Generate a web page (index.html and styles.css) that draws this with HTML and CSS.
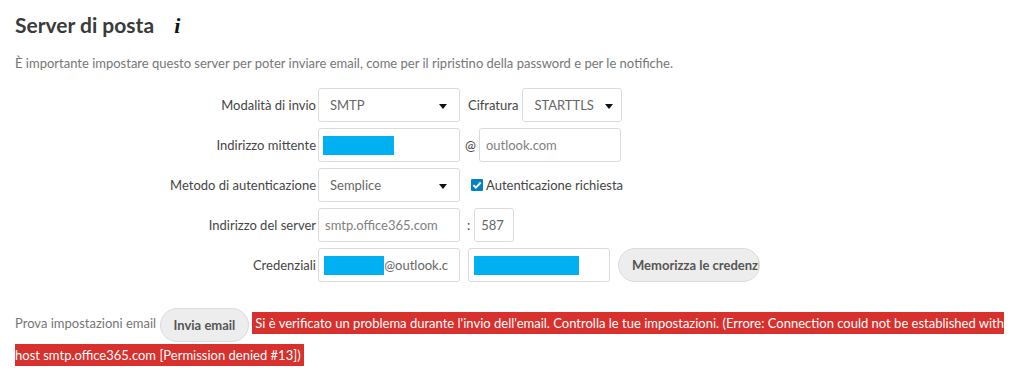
FILE: index.html
```html
<!DOCTYPE html>
<html>
<head>
  <meta charset="UTF-8">
  <title>Server di posta</title>
  <link rel="stylesheet" href="styles.css">
</head>
<body>

  <div class="section">
    <h2 class="title">Server di posta <span class="info">i</span></h2>
    <p class="desc">È importante impostare questo server per poter inviare email, come per il ripristino della password e per le notifiche.</p>

    <div class="form">
      <div class="row">
        <label class="lbl">Modalità di invio</label>
        <div class="select wide"><span>SMTP</span></div>
        <span class="txt">Cifratura</span>
        <div class="select small"><span>STARTTLS</span></div>
      </div>

      <div class="row">
        <label class="lbl">Indirizzo mittente</label>
        <div class="input wide"><span class="mask m1"></span></div>
        <span class="txt sep">@</span>
        <div class="input wide ph">outlook.com</div>
      </div>

      <div class="row">
        <label class="lbl">Metodo di autenticazione</label>
        <div class="select wide"><span>Semplice</span></div>
        <label class="check">
          <svg width="12" height="12" viewBox="0 0 12 12"><rect width="12" height="12" rx="1" fill="#0082c9"/><path d="M2.4 6.1 L4.9 8.6 L9.7 3.5" stroke="#fff" stroke-width="1.9" fill="none"/></svg>
          Autenticazione richiesta
        </label>
      </div>

      <div class="row">
        <label class="lbl">Indirizzo del server</label>
        <div class="input wide ph">smtp.office365.com</div>
        <span class="txt colon">:</span>
        <div class="input port">587</div>
      </div>

      <div class="row">
        <label class="lbl">Credenziali</label>
        <div class="input wide"><span class="mask m2"></span>@outlook.c</div>
        <div class="input wide pass"><span class="mask m3"></span></div>
        <button class="btn store">Memorizza le credenziali</button>
      </div>
    </div>

    <p class="test"><span class="test-lbl">Prova impostazioni email</span> <button class="btn">Invia email</button><span class="error">Si è verificato un problema durante l'invio dell'email. Controlla le tue impostazioni. (Errore: Connection could not be established with host smtp.office365.com [Permission denied #13])</span></p>
  </div>

</body>
</html>
```

FILE: styles.css
```css
body { margin:0; background:#fff; font-family:Lato, "Open Sans", sans-serif; font-size:13px; color:#454545; }
.section { padding:10px 7px 0 15px; }
.title { margin:0; font-size:21px; line-height:30px; font-weight:700; color:#3a3a3a; }
.info { font-family:"Liberation Serif", serif; font-style:italic; font-weight:700; font-size:22px; color:#111; margin-left:15px; }
.desc { margin:12px 0 12px; line-height:20px; color:#767676; }

.form { display:flex; flex-direction:column; }
.row { display:flex; align-items:center; height:40px; }
.lbl { width:301px; text-align:right; padding-right:2px; white-space:nowrap; }
.txt { margin:0 4px 0 8px; }
.sep { margin:0 3px 0 5px; }
.colon { margin:0 4px 0 7px; }

.input, .select { box-sizing:border-box; height:34px; border:1px solid #dbdbdb; border-radius:3px; padding:0 11px; display:flex; align-items:center; color:#666; background:#fff; white-space:nowrap; overflow:hidden; }
.wide { width:142px; }
.small { width:100px; }
.port { width:40px; padding:0 6px; }
.ph { color:#808080; padding:0 6px; }
.pass { margin-left:8px; }
.select { position:relative; }
.select::after { content:""; position:absolute; right:12px; top:15px; border-left:4px solid transparent; border-right:4px solid transparent; border-top:5px solid #111; }
.select.small::after { right:8px; }

.mask { display:inline-block; height:19px; background:#00b0f0; }
.m1 { width:71px; margin-left:-7px; }
.m2 { width:67px; margin-left:-6px; }
.m3 { width:105px; margin-left:-6px; }

.check { display:flex; align-items:center; gap:3px; margin-left:11px; }
.check svg { display:block; }

.btn { box-sizing:border-box; height:34px; border:1px solid #dbdbdb; border-radius:17px; background:#ededed; font-family:inherit; font-size:13px; font-weight:700; color:#555; padding:0 13px; }
.store { width:142px; margin-left:8px; text-align:left; overflow:hidden; white-space:nowrap; }

.test { margin:20px 0 0; line-height:21px; color:#767676; }
.test .btn { margin:3px 0; vertical-align:middle; }
.error { background:#d8302c; color:#fff; padding:3px; margin-left:3px; }
```
